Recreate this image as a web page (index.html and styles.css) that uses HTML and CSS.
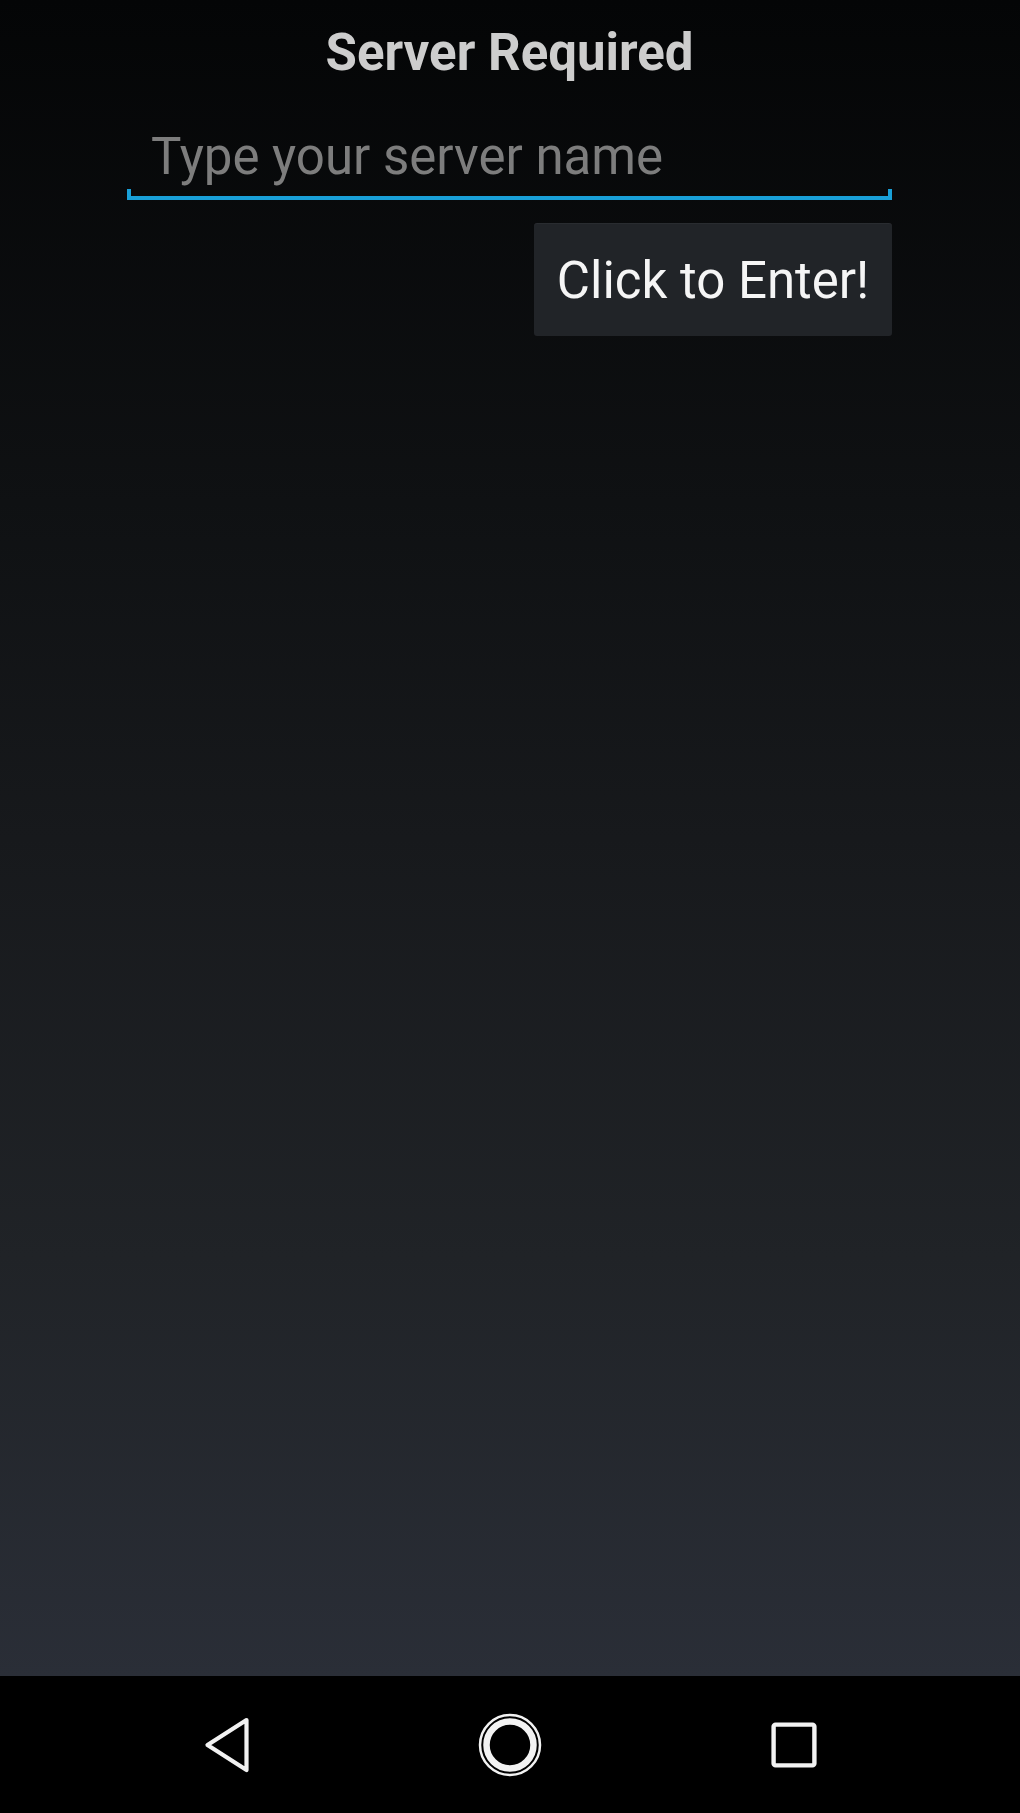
FILE: index.html
```html
<!DOCTYPE html>
<html lang="en">
<head>
<meta charset="utf-8">
<title>Server Required</title>
<link rel="stylesheet" href="styles.css">
</head>
<body>
<div class="screen">
  <main class="content">
    <h1 class="title">Server Required</h1>
    <div class="field">
      <input class="field-input" type="text" placeholder="Type your server name">
    </div>
    <div class="actions">
      <button class="enter-btn" type="button">Click to Enter!</button>
    </div>
  </main>
  <nav class="navbar">
    <svg class="nav-icon" viewBox="0 0 64 64" aria-label="Back">
      <path d="M51.5 7 L12.5 32 L51.5 57 Z" fill="none" stroke="#f2f2f2" stroke-width="4.2" stroke-linejoin="round"/>
    </svg>
    <svg class="nav-icon" viewBox="0 0 64 64" aria-label="Home">
      <circle cx="32" cy="32" r="30" fill="none" stroke="#f2f2f2" stroke-width="2.5"/>
      <circle cx="32" cy="32" r="23.5" fill="none" stroke="#f2f2f2" stroke-width="6.5"/>
    </svg>
    <svg class="nav-icon" viewBox="0 0 64 64" aria-label="Recents">
      <rect x="11.6" y="11.6" width="40.8" height="40.8" rx="2" fill="none" stroke="#f2f2f2" stroke-width="4.4"/>
    </svg>
  </nav>
</div>
</body>
</html>
```

FILE: styles.css
```css
html, body {
  margin: 0;
  padding: 0;
  background: #000;
}

.screen {
  width: 1020px;
  height: 1813px;
  display: flex;
  flex-direction: column;
  font-family: Roboto, "Noto Sans", sans-serif;
}

.content {
  flex: 1;
  background: linear-gradient(to bottom, #040506 0%, #0f1113 30%, #17191c 50%, #202327 75%, #2a2e37 100%);
  padding: 23px 128px 0 127px;
  display: flex;
  flex-direction: column;
}

.title {
  margin: 0;
  font-size: 51px;
  font-weight: 700;
  line-height: normal;
  color: #cdcdcd;
  text-align: center;
}

.field {
  position: relative;
  margin-top: 44px;
  padding: 0 0 10px 24px;
  border-bottom: 4px solid #19a0d8;
}

.field::before,
.field::after {
  content: "";
  position: absolute;
  bottom: -4px;
  width: 4px;
  height: 11px;
  background: #19a0d8;
}

.field::before { left: 0; }
.field::after { right: 0; }

.field-input {
  display: block;
  width: 100%;
  box-sizing: border-box;
  margin: 0;
  padding: 0;
  border: none;
  outline: none;
  background: transparent;
  font-family: Roboto, "Noto Sans", sans-serif;
  font-size: 51px;
  line-height: normal;
  height: 60px;
  color: #e0e0e0;
}

.field-input::placeholder {
  color: #7d7d7d;
  opacity: 1;
}

.actions {
  display: flex;
  justify-content: flex-end;
  margin-top: 23px;
}

.enter-btn {
  width: 358px;
  height: 113px;
  margin: 0;
  padding: 2px 0 0 0;
  border: none;
  border-radius: 3px;
  background: #212428;
  box-shadow: inset 0 1px 0 rgba(255, 255, 255, 0.04);
  color: #f5f5f5;
  font-family: Roboto, "Noto Sans", sans-serif;
  font-size: 51px;
  font-weight: 400;
  display: flex;
  align-items: center;
  justify-content: center;
}

.navbar {
  height: 137px;
  background: #000;
  display: flex;
  align-items: center;
  justify-content: center;
  gap: 219.5px;
}

.nav-icon {
  width: 64px;
  height: 64px;
  display: block;
}
```
